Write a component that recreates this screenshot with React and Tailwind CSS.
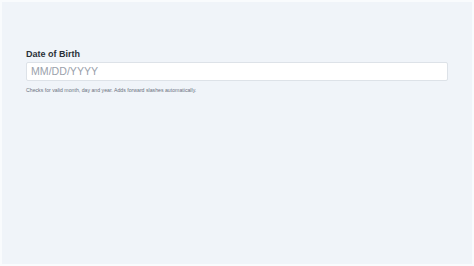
export default function App() {
  return (
    <div className="w-[474px] h-[266px] bg-[#f9fbfd] p-[2px]" style={{ fontFamily: '"Liberation Sans", Arial, sans-serif' }}>
      <div className="h-full bg-[#f0f4f9] px-[24px] pt-[46px]">
        <label className="block text-[9px] leading-[12px] font-bold text-[#2a3038]">Date of Birth</label>
        <div className="mt-[2px] h-[19px] bg-white border border-[#dde2e8] rounded-[2px] flex items-center pl-[4px]">
          <span className="text-[10.6px] text-[#9aa1ab]">MM/DD/YYYY</span>
        </div>
        <p className="mt-[6px] text-[5.2px] leading-[7px] text-[#6b7280]">Checks for valid month, day and year. Adds forward slashes automatically.</p>
      </div>
    </div>
  );
}
